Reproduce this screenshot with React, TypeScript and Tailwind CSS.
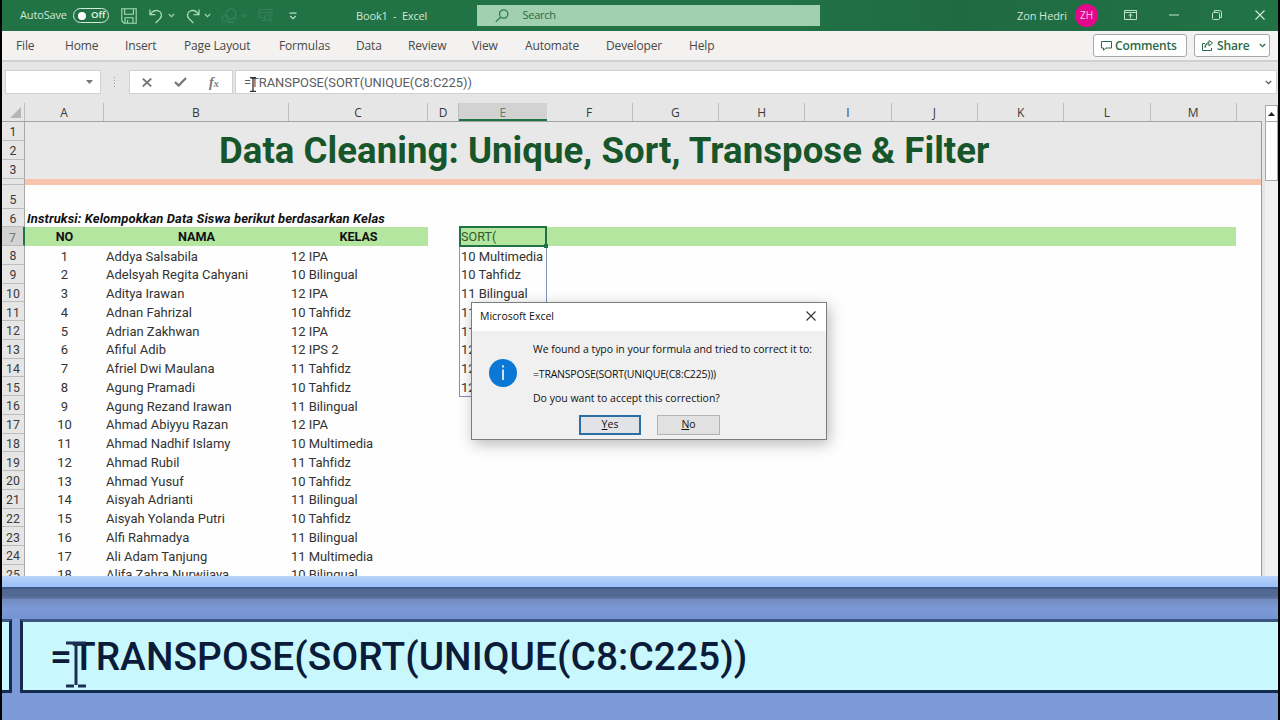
const TABS = [
  { label: 'File', width: 'w-[49px]' },
  { label: 'Home', width: 'w-[60px]' },
  { label: 'Insert', width: 'w-[59px]' },
  { label: 'Page Layout', width: 'w-[95px]' },
  { label: 'Formulas', width: 'w-[77px]' },
  { label: 'Data', width: 'w-[52px]' },
  { label: 'Review', width: 'w-[64px]' },
  { label: 'View', width: 'w-[53px]' },
  { label: 'Automate', width: 'w-[81px]' },
  { label: 'Developer', width: 'w-[83px]' },
  { label: 'Help', width: 'w-[40px]' },
];

const COLUMNS = [
  { name: 'A', width: 'w-[79px]' },
  { name: 'B', width: 'w-[185px]' },
  { name: 'C', width: 'w-[139px]' },
  { name: 'D', width: 'w-[31px]' },
  { name: 'E', width: 'w-[87.5px]' },
  { name: 'F', width: 'w-[86.3px]' },
  { name: 'G', width: 'w-[86.3px]' },
  { name: 'H', width: 'w-[86.3px]' },
  { name: 'I', width: 'w-[86.3px]' },
  { name: 'J', width: 'w-[86.3px]' },
  { name: 'K', width: 'w-[86.3px]' },
  { name: 'L', width: 'w-[86.3px]' },
  { name: 'M', width: 'w-[86.3px]' },
];

const ROW_NUMBERS = [
  { n: '1', height: 'h-[18.5px]' },
  { n: '2', height: 'h-[19px]' },
  { n: '3', height: 'h-[19px]' },
  { n: '', height: 'h-[6.5px]' },
  { n: '5', height: 'h-[23.5px] pt-[5px]' },
];

// n is the sheet row, the list starts right below the header row
const STUDENTS = [
  { n: 8, no: 1, name: 'Addya Salsabila', kelas: '12 IPA', spill: '10 Multimedia' },
  { n: 9, no: 2, name: 'Adelsyah Regita Cahyani', kelas: '10 Bilingual', spill: '10 Tahfidz' },
  { n: 10, no: 3, name: 'Aditya Irawan', kelas: '12 IPA', spill: '11 Bilingual' },
  { n: 11, no: 4, name: 'Adnan Fahrizal', kelas: '10 Tahfidz', spill: '11' },
  { n: 12, no: 5, name: 'Adrian Zakhwan', kelas: '12 IPA', spill: '11' },
  { n: 13, no: 6, name: 'Afiful Adib', kelas: '12 IPS 2', spill: '12' },
  { n: 14, no: 7, name: 'Afriel Dwi Maulana', kelas: '11 Tahfidz', spill: '12' },
  { n: 15, no: 8, name: 'Agung Pramadi', kelas: '10 Tahfidz', spill: '12' },
  { n: 16, no: 9, name: 'Agung Rezand Irawan', kelas: '11 Bilingual' },
  { n: 17, no: 10, name: 'Ahmad Abiyyu Razan', kelas: '12 IPA' },
  { n: 18, no: 11, name: 'Ahmad Nadhif Islamy', kelas: '10 Multimedia' },
  { n: 19, no: 12, name: 'Ahmad Rubil', kelas: '11 Tahfidz' },
  { n: 20, no: 13, name: 'Ahmad Yusuf', kelas: '10 Tahfidz' },
  { n: 21, no: 14, name: 'Aisyah Adrianti', kelas: '11 Bilingual' },
  { n: 22, no: 15, name: 'Aisyah Yolanda Putri', kelas: '10 Tahfidz' },
  { n: 23, no: 16, name: 'Alfi Rahmadya', kelas: '11 Bilingual' },
  { n: 24, no: 17, name: 'Ali Adam Tanjung', kelas: '11 Multimedia' },
  { n: 25, no: 18, name: 'Alifa Zahra Nurwijaya', kelas: '10 Bilingual' },
];

function Chevron({ className }: { className: string }) {
  return (
    <svg className={className} width="7" height="5" viewBox="0 0 7 5" fill="none" stroke="currentColor" strokeWidth="1.2">
      <path d="M0.8 1l2.7 2.6L6.2 1" />
    </svg>
  );
}

function TitleBar() {
  return (
    <header className="flex h-[31px] shrink-0 items-center bg-linear-to-r from-[#217346] from-60% via-[#206a42] via-75% to-[#217346] text-[#cfe8d6]">
      <span className="w-[53px] pl-[18px] text-[11px] tracking-[-0.15px] whitespace-nowrap">AutoSave</span>
      <span className="ml-[18px] flex h-[15px] w-[36px] items-center rounded-full border border-[#d5ecdc] pl-[4px]">
        <span className="h-[8px] w-[8px] rounded-full bg-white" />
        <span className="ml-[5px] text-[9.5px] font-semibold text-[#e6f5ea]">Off</span>
      </span>

      {/* Quick access */}
      <svg className="ml-[12px]" width="16" height="16" viewBox="0 0 16 16" fill="none" stroke="#a8dbb8" strokeWidth="1.1">
        <path d="M0.8 0.8h14.4v14.4H3L0.8 13zM3.6 0.8v5.4h8.8V0.8M4 15V9.8h8V15M6.6 15v-3" />
      </svg>
      <svg className="ml-[12px]" width="14" height="16" viewBox="0 0 14 16" fill="none" stroke="#a8dbb8" strokeWidth="1.3">
        <path d="M1 1.5v5.2h5.4M1.2 6.5C3.6 3 6.2 2 8.8 2.7c4 1.1 4.9 5.2 2.1 8.1L6.6 15" />
      </svg>
      <Chevron className="ml-[5px] text-[#9ed3af]" />
      <svg className="ml-[11px]" width="14" height="16" viewBox="0 0 14 16" fill="none" stroke="#a8dbb8" strokeWidth="1.3">
        <path d="M13 1.5v5.2H7.6M12.8 6.5C10.4 3 7.8 2 5.2 2.7c-4 1.1-4.9 5.2-2.1 8.1L7.4 15" />
      </svg>
      <Chevron className="ml-[4px] text-[#9ed3af]" />
      <svg className="ml-[10px]" width="17" height="15" viewBox="0 0 17 15" fill="none" stroke="#35825a" strokeWidth="1.3">
        <circle cx="10" cy="6" r="5" />
        <circle cx="4" cy="10.5" r="3" />
        <path d="M7 14h6M13 9.5l3 2.5" />
      </svg>
      <Chevron className="ml-[3px] text-[#35825a]" />
      <svg className="ml-[10px]" width="15" height="15" viewBox="0 0 15 15" fill="none" stroke="#35825a" strokeWidth="1.2">
        <path d="M1 1.5h13V7M1 1.5v8h5M1 4.5h13" />
        <circle cx="9.5" cy="9.5" r="3" />
        <path d="M11.6 11.6L14 14M4 12.5h3" />
      </svg>
      <svg className="ml-[16px]" width="8" height="8" viewBox="0 0 8 8" fill="none" stroke="#b9e0c5" strokeWidth="1.2">
        <path d="M0.5 1.2h7M1.2 4l2.8 2.6L6.8 4" />
      </svg>

      <span className="ml-[59px] w-[121px] pt-[1px] text-[11px] tracking-[-0.15px] whitespace-pre">Book1  -  Excel</span>

      <div className="flex h-[21px] w-[343px] items-center bg-[#a0d0b0] text-[#2b6b48]">
        <svg className="ml-[18px]" width="14" height="14" viewBox="0 0 14 14" fill="none" stroke="#2b7a50" strokeWidth="1.2">
          <circle cx="8.7" cy="5" r="4.2" />
          <path d="M5.7 8L0.8 12.9" />
        </svg>
        <span className="ml-[13.5px] text-[11px] tracking-[-0.25px]">Search</span>
      </div>

      <span className="ml-[197px] w-[58px] pt-[1px] text-[11px] tracking-[-0.1px] whitespace-nowrap">Zon Hedri</span>
      <span className="flex h-[23px] w-[23px] items-center justify-center rounded-full bg-[#e3078b] text-[10px] text-[#f9c6e2]">ZH</span>
      <svg className="mb-[2px] ml-[26px]" width="13" height="10" viewBox="0 0 13 10" fill="none" stroke="#bfe3ca">
        <path d="M0.5 0.5h12v9H0.5zM0.5 2.5h12M6.5 8.5V4M4.5 5.8l2-1.8 2 1.8" />
      </svg>
      <svg className="mb-[2px] ml-[32px]" width="10" height="2" viewBox="0 0 10 2" stroke="#bfe3ca">
        <path d="M0 1h10" />
      </svg>
      <svg className="mb-[2px] ml-[33px]" width="10" height="10" viewBox="0 0 10 10" fill="none" stroke="#bfe3ca">
        <rect x="0.5" y="2.5" width="7" height="7" rx="1" />
        <path d="M2.5 2.5V0.5h5a2 2 0 0 1 2 2v5h-2" />
      </svg>
      <svg className="mb-[2px] ml-[33px]" width="10" height="10" viewBox="0 0 10 10" stroke="#d3eddb" strokeWidth="1.1">
        <path d="M0.5 0.5l9 9M9.5 0.5l-9 9" />
      </svg>
    </header>
  );
}

function RibbonTabs() {
  return (
    <nav className="flex h-[29px] shrink-0 items-center bg-[#f3f2f0] pl-[14px] text-[12px] text-[#4a4846]">
      {TABS.map((tab) => (
        <span key={tab.label} className={`${tab.width} shrink-0 pt-[1px] tracking-[-0.15px] whitespace-nowrap`}>
          {tab.label}
        </span>
      ))}
      <button type="button" className="ml-auto flex h-[23px] w-[94px] items-center rounded-[3px] border border-[#a9a9a8] bg-white pl-[7px] font-semibold text-[#2a6a49]">
        <svg width="11" height="10" viewBox="0 0 11 10" fill="none" stroke="currentColor">
          <path d="M0.5 0.5h10v6.5H4.8L2.5 9.3V7H0.5z" />
        </svg>
        <span className="ml-[3px] tracking-[-0.15px]">Comments</span>
      </button>
      <button type="button" className="mr-[8px] ml-[7px] flex h-[23px] w-[76px] items-center rounded-[3px] border border-[#a9a9a8] bg-white pl-[7px] font-semibold text-[#2a6a49]">
        <svg width="11" height="11" viewBox="0 0 11 11" fill="none" stroke="currentColor">
          <path d="M3 3.5H0.5v7h9V8M3 7.5c.3-2.5 1.7-3.7 4-3.8V6l3.5-3L7 0.6v2C4.5 2.7 3.2 4.5 3 7.5z" />
        </svg>
        <span className="ml-[4px] tracking-[-0.15px]">Share</span>
        <Chevron className="ml-[9px] shrink-0" />
      </button>
    </nav>
  );
}

function FormulaBar() {
  return (
    <div className="flex h-[35px] shrink-0 items-start border-t-2 border-[#d2d1d0] bg-[#e6e6e6] pt-[8px] pl-[3px]">
      <div className="flex h-[24px] w-[96px] items-center justify-end border border-[#d0d0d0] bg-white pr-[7px]">
        <svg width="7" height="4" viewBox="0 0 7 4" fill="#777">
          <path d="M0 0h7L3.5 4z" />
        </svg>
      </div>
      <div className="ml-[12px] flex h-[24px] w-[2px] flex-col items-center justify-center gap-[2px]">
        <span className="h-[1px] w-[1px] bg-[#999]" />
        <span className="h-[1px] w-[1px] bg-[#999]" />
        <span className="h-[1px] w-[1px] bg-[#999]" />
        <span className="h-[1px] w-[1px] bg-[#999]" />
      </div>
      <div className="ml-[14px] flex h-[24px] w-[104px] items-center border border-[#d0d0d0] bg-white text-[#777]">
        <svg className="ml-[12px]" width="10" height="9" viewBox="0 0 10 9" stroke="currentColor" strokeWidth="1.8">
          <path d="M0.8 0.5l8.4 8M9.2 0.5l-8.4 8" />
        </svg>
        <svg className="ml-[22px]" width="13" height="10" viewBox="0 0 13 10" fill="none" stroke="currentColor" strokeWidth="2.2">
          <path d="M1 5l3.6 3.6L12 1" />
        </svg>
        <span className="ml-[22px] font-['Liberation_Serif',serif] text-[14px] font-bold italic">
          f<span className="text-[10px]">x</span>
        </span>
      </div>
      <div className="relative ml-[2px] flex h-[24px] w-[1042px] items-center border border-[#d0d0d0] bg-white pr-[4px] pl-[8px]">
        <span className="flex-1 pt-[2px] font-['Roboto',sans-serif] text-[12.9px] leading-[16px] tracking-[-0.01px] text-[#5c5c5c]">
          =TRANSPOSE(SORT(UNIQUE(C8:C225))
        </span>
        <Chevron className="text-[#555]" />
        {/* Text cursor */}
        <svg className="absolute top-[6px] left-[13px]" width="8" height="15" viewBox="0 0 8 15" fill="none" stroke="#333" strokeWidth="1.3">
          <path d="M1 0.7h6M4 0.7v13.6M1 14.3h6" />
        </svg>
      </div>
    </div>
  );
}

function ColumnHeaders() {
  return (
    <div className="flex h-[27px] shrink-0 bg-[#e6e6e6]">
      <div className="flex w-[1260px] items-end border-b border-[#a3a3a3]">
        <div className="flex h-[18px] w-[23px] items-center justify-end border-r border-[#bdbdbd] pr-[3px]">
          <svg width="11" height="11" viewBox="0 0 11 11" fill="#b5b5b5">
            <path d="M11 0v11H0z" />
          </svg>
        </div>
        {COLUMNS.map((col) => (
          <div
            key={col.name}
            className={`${col.width} flex h-[18px] shrink-0 items-center justify-center text-[12px] ${
              col.name === 'E'
                ? 'border-b-2 border-[#217346] bg-[#d2d2d2] pt-[4px] text-[#6b7a70]'
                : 'border-r border-[#bdbdbd] pt-[2px] text-[#3a3a3a]'
            }`}
          >
            {col.name}
          </div>
        ))}
      </div>
      <div className="ml-[3px] flex h-[17px] w-[13px] items-center justify-center self-end border border-[#a6a6a6] bg-white">
        <svg width="7" height="4" viewBox="0 0 7 4" fill="#222">
          <path d="M3.5 0L7 4H0z" />
        </svg>
      </div>
    </div>
  );
}

function RowNumber({ n, height, active }: { n: string; height: string; active?: boolean }) {
  return (
    <div
      className={`${height} flex shrink-0 items-center justify-center overflow-hidden border-b border-[#bcbcbc] text-[12.3px] leading-[14px] ${
        active ? 'border-r-2 border-r-[#217346] bg-[#d2d2d2] text-[#6b7a70]' : 'border-r border-r-[#a8a8a8] text-[#3a3a3a]'
      }`}
    >
      <span className="pt-[3px]">{n}</span>
    </div>
  );
}

function Sheet() {
  return (
    <div className="flex h-[454px] shrink-0 overflow-hidden bg-[#e6e6e6] font-['Roboto',sans-serif]">
      <div className="flex w-[23px] shrink-0 flex-col">
        {ROW_NUMBERS.map((row) => (
          <RowNumber key={row.height + row.n} n={row.n} height={row.height} />
        ))}
        <RowNumber n="6" height="h-[18.75px]" />
        <RowNumber n="7" height="h-[18.75px]" active />
        {STUDENTS.map((s) => (
          <RowNumber key={s.n} n={String(s.n)} height="h-[18.75px]" />
        ))}
      </div>

      <div className="relative flex w-[1237px] shrink-0 flex-col border-r border-[#9a9a9a] bg-[#fefefe] text-[13px] text-[#333]">
        <div className="flex h-[56.5px] shrink-0 items-center bg-[#e8e8e8] pt-[3px] pl-[194px]">
          <h1 className="text-[36.6px] font-bold tracking-[0.04px] whitespace-nowrap text-[#17562a]">
            Data Cleaning: Unique, Sort, Transpose &amp; Filter
          </h1>
        </div>
        <div className="h-[6.5px] shrink-0 bg-[#f8c4ae]" />
        <div className="h-[23.5px] shrink-0" />
        <div className="flex h-[18.75px] shrink-0 items-center pt-[1px] pl-[2px] font-bold tracking-[0.11px] text-[#111] italic">
          Instruksi: Kelompokkan Data Siswa berikut berdasarkan Kelas
        </div>

        <div className="flex h-[18.75px] shrink-0 items-center">
          <div className="flex h-full w-[403px] items-center bg-[#b5e6a0] pt-[2px] text-[12.6px] font-bold text-[#111]">
            <span className="w-[79px] text-center">NO</span>
            <span className="w-[185px] text-center">NAMA</span>
            <span className="w-[139px] text-center">KELAS</span>
          </div>
          <div className="ml-[31px] flex h-full w-[777px] items-center bg-[#b5e6a0] pt-[2px] pl-[2px] text-[12.6px] text-[#2f5a2a]">
            SORT(
          </div>
        </div>

        {STUDENTS.map((s) => (
          <div key={s.n} className="flex h-[18.75px] shrink-0 items-center pt-[2px]">
            <span className="w-[79px] text-center">{s.no}</span>
            <span className="w-[185px] pl-[2px]">{s.name}</span>
            <span className="w-[139px] pl-[2px] tracking-[-0.05px]">{s.kelas}</span>
            <span className="ml-[31px] w-[87px] pl-[2px] tracking-[-0.05px] whitespace-nowrap">{s.spill}</span>
          </div>
        ))}

        {/* Spill range and active cell outlines */}
        <div className="absolute top-[124px] left-[434px] h-[151px] w-[88px] border border-[#7f93bd]" />
        <div className="absolute top-[104px] left-[434px] h-[21px] w-[88px] border-2 border-[#217346]" />
        <div className="absolute top-[122px] left-[519px] h-[4px] w-[4px] bg-[#217346]" />
      </div>

      <div className="ml-[3px] w-[13px] shrink-0 bg-[#f0f0f0]">
        <div className="h-[59px] border border-t-0 border-[#a6a6a6] bg-white" />
      </div>
    </div>
  );
}

function TypoDialog() {
  return (
    <div
      role="dialog"
      aria-label="Microsoft Excel"
      className="absolute top-[302px] left-[471px] flex h-[138px] w-[356px] flex-col border border-[#7d7d7d] bg-[#f0f0f0] text-[10.5px] text-[#111] shadow-[2px_4px_14px_rgba(0,0,0,0.28)]"
    >
      <div className="flex h-[28px] shrink-0 items-center justify-between bg-white pr-[10px] pl-[8px]">
        <span>Microsoft Excel</span>
        <svg className="mb-[2px]" width="10" height="10" viewBox="0 0 10 10" stroke="#333" strokeWidth="1.1">
          <path d="M0.5 0.5l9 9M9.5 0.5l-9 9" />
        </svg>
      </div>
      <div className="flex">
        <svg className="mt-[28px] ml-[17px]" width="28" height="28" viewBox="0 0 28 28">
          <circle cx="14" cy="14" r="14" fill="#0a78d4" />
          <path d="M14 10.5v10.5M14 6.2v2.2" stroke="#fff" strokeWidth="1.6" />
        </svg>
        <div className="ml-[16px] flex flex-col pt-[6px] leading-[24.5px] whitespace-nowrap">
          <span className="tracking-[-0.03px]">We found a typo in your formula and tried to correct it to:</span>
          <span className="tracking-[-0.2px]">=TRANSPOSE(SORT(UNIQUE(C8:C225)))</span>
          <span>Do you want to accept this correction?</span>
        </div>
      </div>
      <div className="mt-[4px] ml-[107px] flex gap-[16px]">
        <button type="button" className="flex h-[20px] w-[62px] items-center justify-center border-2 border-[#2a6ea6] bg-[#e1e3e6]">
          <span><span className="underline">Y</span>es</span>
        </button>
        <button type="button" className="flex h-[20px] w-[63px] items-center justify-center border border-[#b3b3b3] bg-[#e1e1e1]">
          <span><span className="underline">N</span>o</span>
        </button>
      </div>
    </div>
  );
}

// Magnified view of the formula bar
function Magnifier() {
  return (
    <section className="flex h-[144px] shrink-0 flex-col bg-[#7c9ad8]">
      <div className="h-[11px] shrink-0 bg-linear-to-b from-[#b9d2f7] to-[#98c0fb]" />
      <div className="h-[12px] shrink-0 border-t-2 border-[#3f5a8a] bg-linear-to-b from-[#536890] from-70% to-[#6479a6]" />
      <div className="h-[20px] shrink-0 bg-linear-to-b from-[#7389bf] via-[#7c9ad6] to-[#7393d2]" />
      <div className="flex h-[74px] shrink-0">
        <div className="w-[10px] border-y-3 border-r-3 border-[#142b4f] border-t-[#3c5684] bg-[#c8f8fe]" />
        <div className="relative ml-[8px] flex flex-1 items-center border-y-3 border-l-3 border-[#142b4f] border-t-[#3c5684] bg-[#c8f8fe] pt-[2px] pl-[27px]">
          <span className="font-['Roboto',sans-serif] text-[38.8px] leading-none font-medium tracking-[0.08px] whitespace-nowrap text-[#0b1c3a]">
            =TRANSPOSE(SORT(UNIQUE(C8:C225))
          </span>
          <svg className="absolute top-[19px] left-[43px]" width="20" height="47" viewBox="0 0 20 47" fill="none" stroke="#1c2f52" strokeWidth="3">
            <path d="M0 2h20M10 2v42M0 45h8M12 45h8" />
          </svg>
        </div>
      </div>
    </section>
  );
}

export default function App() {
  return (
    <div className="h-[720px] w-[1280px] overflow-hidden bg-black px-[2px] font-['Open_Sans',sans-serif]">
      <div className="flex h-full flex-col">
        <TitleBar />
        <RibbonTabs />
        <FormulaBar />
        <ColumnHeaders />
        <Sheet />
        <Magnifier />
      </div>
      <TypoDialog />
    </div>
  );
}
